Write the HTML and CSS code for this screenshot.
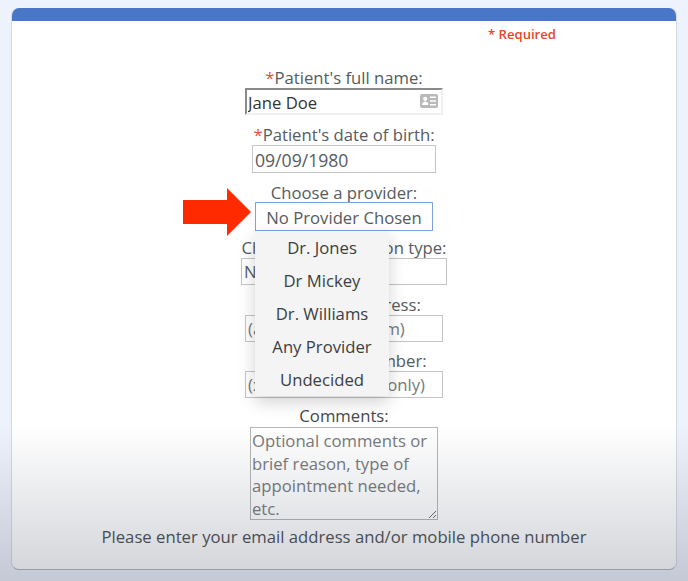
FILE: index.html
```html
<!DOCTYPE html>
<html>
<head>
    <title>Request an Appointment</title>
    <link rel="stylesheet" href="styles.css">
</head>
<body>
    <div class="form-card">
        <div class="card-bar"></div>
        <p class="required-note">* Required</p>

        <form class="appt-form" action="#" method="POST">
            <div class="form-group name-group">
                <label for="fullname"><span class="star">*</span>Patient's full name:</label>
                <div class="name-box">
                    <input type="text" id="fullname" value="Jane Doe">
                    <svg class="contact-icon" width="18" height="14" viewBox="0 0 18 14">
                        <rect x="0" y="0" width="18" height="14" rx="2" fill="#b9b9b9"/>
                        <circle cx="5.2" cy="4.8" r="2.1" fill="#fff"/>
                        <path d="M2 11c0-2.4 1.4-3.6 3.2-3.6s3.2 1.2 3.2 3.6z" fill="#fff"/>
                        <path d="M10 3.2h6M10 7h6M10 10.8h6" stroke="#fff" stroke-width="1.6"/>
                    </svg>
                </div>
            </div>

            <div class="form-group dob-group">
                <label for="dob"><span class="star">*</span>Patient's date of birth:</label>
                <input type="text" id="dob" value="09/09/1980">
            </div>

            <div class="form-group provider-group">
                <label for="provider">Choose a provider:</label>
                <div class="provider-select" id="provider">No Provider Chosen</div>
                <svg class="red-arrow" width="68" height="48" viewBox="0 0 68 48">
                    <path d="M0 12h44V0l24 24-24 24V36H0z" fill="#ff2a00"/>
                </svg>
                <ul class="provider-menu">
                    <li>Dr. Jones</li>
                    <li>Dr Mickey</li>
                    <li>Dr. Williams</li>
                    <li>Any Provider</li>
                    <li>Undecided</li>
                </ul>
            </div>

            <div class="form-group type-group">
                <label for="apptType">Choose a connection type:</label>
                <input type="text" id="apptType" value="No Type Chosen">
            </div>

            <div class="form-group wide-group">
                <label for="email">Your email address:</label>
                <input type="text" id="email" placeholder="(abc@example.com)">
            </div>

            <div class="form-group wide-group">
                <label for="phone">Your mobile number:</label>
                <input type="text" id="phone" placeholder="(xxx-xxxxxx digits only)">
            </div>

            <div class="form-group comments-group">
                <label for="comments">Comments:</label>
                <textarea id="comments" placeholder="Optional comments or brief reason, type of appointment needed, etc."></textarea>
            </div>

            <p class="contact-note">Please enter your email address and/or mobile phone number</p>
        </form>
    </div>
    <div class="bottom-shade"></div>
</body>
</html>
```

FILE: styles.css
```css
html, body {
    height: 100%;
}

body {
    margin: 0;
    padding: 8px 11px 11px;
    box-sizing: border-box;
    background-color: #eef2fc;
    font-family: "Open Sans", sans-serif;
    font-size: 16.7px;
    color: #555b60;
    position: relative;
    overflow: hidden;
}

.form-card {
    height: 562px;
    box-sizing: border-box;
    background-color: #fff;
    border: 1px solid #d4d8e0;
    border-top: none;
    border-bottom-color: #b4b6ba;
    border-radius: 8px;
    overflow: hidden;
}

.card-bar {
    height: 13px;
    background-color: #4a76c8;
}

.required-note {
    margin: 0;
    padding-left: 476px;
    height: 26px;
    line-height: 26px;
    font-size: 13.1px;
    font-weight: 600;
    color: #e2472c;
}

.appt-form {
    display: flex;
    flex-direction: column;
    align-items: center;
    margin-top: 19px;
}

.form-group {
    display: flex;
    flex-direction: column;
    align-items: center;
    position: relative;
    height: 56px;
}

label {
    display: block;
    height: 24px;
    line-height: 24px;
    white-space: nowrap;
    flex-shrink: 0;
}

.star {
    color: #e8503a;
}

input[type="text"] {
    display: block;
    box-sizing: border-box;
    height: 27px;
    padding: 0 2px;
    border: 1px solid #c4c4c4;
    background-color: #fff;
    font-family: inherit;
    font-size: 16.7px;
    color: #555b60;
    outline: none;
}

input::placeholder,
textarea::placeholder {
    color: #77797b;
    opacity: 1;
}

.name-group {
    height: 57px;
}

.name-box {
    position: relative;
    margin-top: -2px;
}

.name-box input[type="text"] {
    width: 198px;
    height: 27px;
    padding: 2px 1px 0;
    border: 2px solid #f0f0f0;
    border-top-color: #8a8a8a;
    border-left-color: #8a8a8a;
    color: #333;
}

.contact-icon {
    position: absolute;
    top: 6px;
    right: 5px;
}

.dob-group {
    height: 55px;
}

.dob-group label {
    height: 22px;
    line-height: 23px;
}

.dob-group input[type="text"] {
    width: 184px;
    height: 28px;
    padding-top: 1px;
    font-size: 17.6px;
}

.provider-group {
    height: 55px;
    margin-top: 3px;
}

.provider-select {
    box-sizing: border-box;
    width: 178px;
    height: 29px;
    margin-top: -3px;
    border: 1px solid #7ea3dc;
    line-height: 29px;
    text-align: center;
    color: #555b60;
    background-color: #fff;
}

.red-arrow {
    position: absolute;
    left: -72px;
    top: 7px;
}

.provider-menu {
    position: absolute;
    left: 0;
    top: 50px;
    z-index: 2;
    width: 134px;
    height: 165px;
    margin: 0;
    padding: 0;
    list-style: none;
    background-color: #f4f4f4;
    box-shadow: 0 6px 16px rgba(0, 0, 0, 0.18);
    display: flex;
    flex-direction: column;
    justify-content: space-around;
    text-align: center;
    color: #3c3f42;
}

.type-group {
    height: 57px;
}

.type-group input[type="text"] {
    width: 206px;
    margin-top: -2px;
}

.wide-group input[type="text"] {
    width: 198px;
    margin-top: -2px;
}

.comments-group {
    height: auto;
    margin-top: -1px;
}

.comments-group label {
    color: #45494d;
}

textarea {
    display: block;
    box-sizing: border-box;
    width: 188px;
    height: 93px;
    margin: -1px 0 0;
    padding: 2px 1px 0;
    border: 1px solid #b5b5b5;
    background-color: #fff;
    font-family: inherit;
    font-size: 16.7px;
    line-height: 22.7px;
    color: #555b60;
    overflow: hidden;
}

.contact-note {
    margin: 5px 0 0;
    line-height: 23px;
    white-space: nowrap;
    color: #4a4e52;
}

.bottom-shade {
    position: absolute;
    left: 0;
    right: 0;
    top: 425px;
    bottom: 0;
    background: linear-gradient(rgba(60, 70, 90, 0), rgba(60, 70, 90, 0.24));
    pointer-events: none;
    z-index: 3;
}
```
